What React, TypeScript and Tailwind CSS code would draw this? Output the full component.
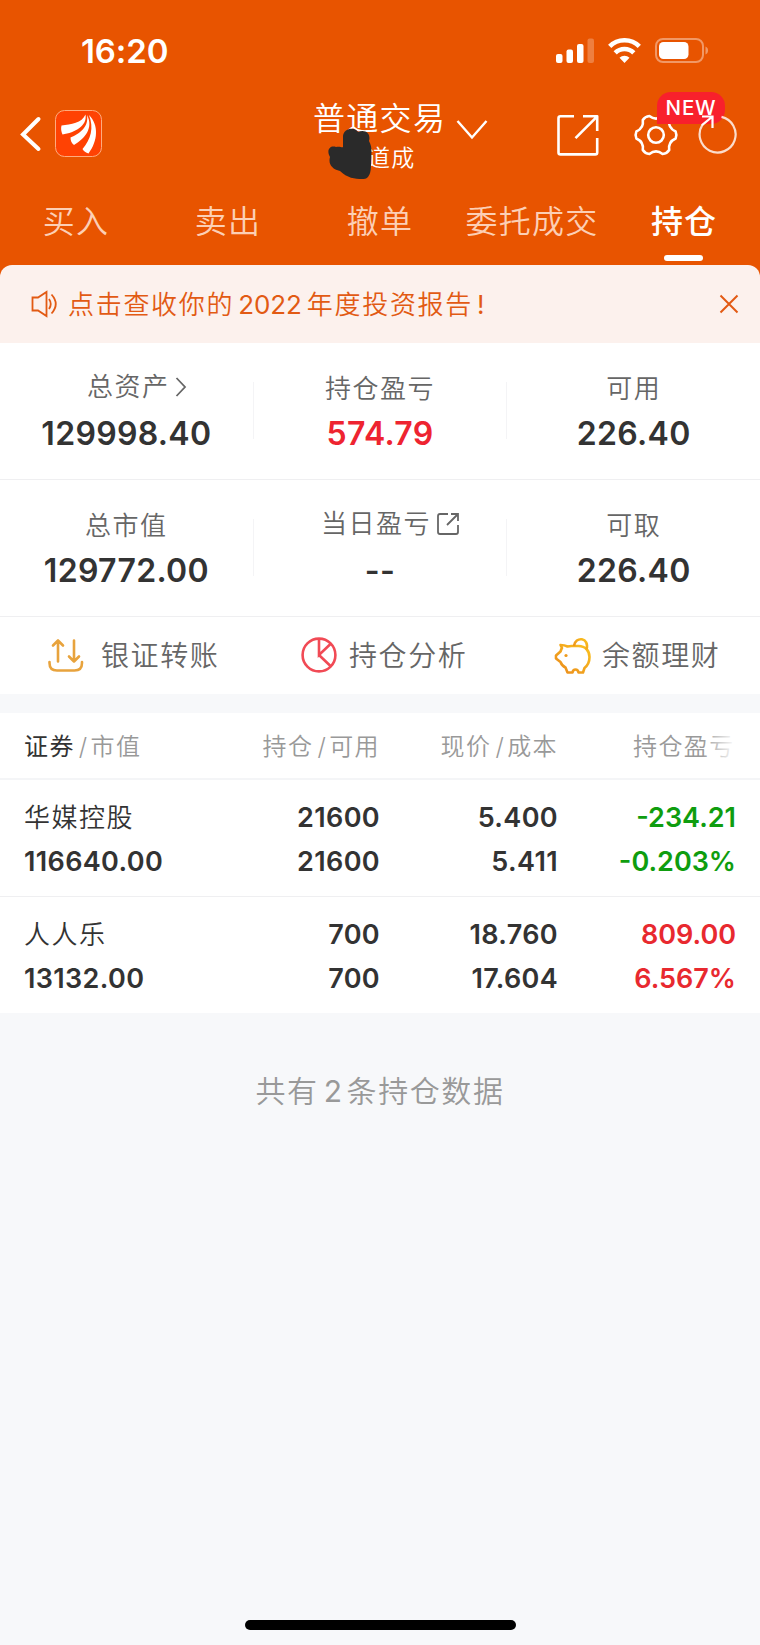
import type { ReactNode } from "react";

const tabs = ["买入", "卖出", "撤单", "委托成交", "持仓"];

const holdings = [
  {
    name: "华媒控股",
    value: "116640.00",
    amount: "21600",
    available: "21600",
    price: "5.400",
    cost: "5.411",
    profit: "-234.21",
    rate: "-0.203%",
    up: false,
  },
  {
    name: "人人乐",
    value: "13132.00",
    amount: "700",
    available: "700",
    price: "18.760",
    cost: "17.604",
    profit: "809.00",
    rate: "6.567%",
    up: true,
  },
];

function StatusBar() {
  return (
    <div className="flex h-[96px] items-start justify-between pt-[34px] pr-[51px] pl-[81px]">
      <span className="text-[33px] leading-[34px] font-semibold tracking-[-0.1px]">16:20</span>
      <div className="flex items-center pt-[4px]">
        <svg width="38" height="25" viewBox="0 0 38 25" fill="#fff">
          <rect x="0" y="16" width="6.5" height="9" rx="2" />
          <rect x="10.5" y="11.5" width="6.5" height="13.5" rx="2" />
          <rect x="21" y="6" width="6.5" height="19" rx="2" />
          <rect x="31.5" y="0.5" width="6.5" height="24.5" rx="2" opacity=".25" />
        </svg>
        <svg className="ml-[14px]" width="33" height="25" viewBox="0 0 33 25" fill="none" stroke="#fff">
          <path d="M1.7 8.4a21 21 0 0 1 29.6 0" strokeWidth="4.6" />
          <path d="M7.2 14.8a13.2 13.2 0 0 1 18.6 0" strokeWidth="4.6" />
          <path d="M16.5 25l-5-5.2a7.2 7.2 0 0 1 10 0z" fill="#fff" stroke="none" />
        </svg>
        <svg className="ml-[14px]" width="54" height="25" viewBox="0 0 54 25">
          <rect x="1" y="1" width="47" height="23" rx="7" fill="none" stroke="#fff" strokeOpacity=".4" strokeWidth="2" />
          <rect x="4" y="4" width="29.5" height="17" rx="4.5" fill="#fff" />
          <path d="M50.5 8.5c3.4 1.2 3.4 6.8 0 8z" fill="#fff" fillOpacity=".4" />
        </svg>
      </div>
    </div>
  );
}

function NavBar() {
  return (
    <div className="flex h-[89px] items-start text-white">
      <div className="flex w-[313px] pt-[14px] pl-[20px]">
        <svg className="mt-[6px]" width="22" height="36" viewBox="0 0 22 36" fill="none" stroke="#fff" strokeWidth="4">
          <path d="M18.5 3L3 18.5 18.5 33" strokeLinecap="round" />
        </svg>
        <svg className="ml-[13px]" width="47" height="47" viewBox="0 0 47 47">
          <rect x=".5" y=".5" width="46" height="46" rx="9" fill="#ff4203" stroke="#ffab7e" />
          <g fill="#fff">
            <path d="M30.5 4.5C27 13 16 14.5 6.5 15.5c-.8 3-.3 6 1 9C20 22.5 32.5 16 30.5 4.5z" />
            <path d="M32 5C34 17 25 23.5 15.5 27.5c0 3 1 5.5 3.5 7.5C29.5 29 39 18 32 5z" />
            <path d="M34 5C44 15 43 31 33.5 43.5c-2.5-1-5-2.5-6-4.5C36 29 39 18 34 5z" />
          </g>
        </svg>
      </div>
      <div className="relative pt-[5px]">
        <div className="flex items-start">
          <span className="text-[32px] leading-[36px] font-[350] tracking-[1.3px]">普通交易</span>
          <svg className="mt-[18px] ml-[10px]" width="32" height="21" viewBox="0 0 32 21" fill="none" stroke="#fff" strokeWidth="2.4">
            <path d="M1.5 2L16 18.5 30.5 2" />
          </svg>
        </div>
        <p className="mt-[4px] ml-[54px] text-[23px] leading-[28px] font-[350] tracking-[1.2px]">道成</p>
        {/* scribble over the first part of the account name */}
        <svg className="absolute top-[32px] left-[14px]" width="46" height="52" viewBox="0 0 46 52">
          <path
            d="M16 8C17-1 29-1 31 4c8-3 13 2 11 9 4 7 2 14 2 24 0 8-2 15-9 14-7 0-15-1-22-8C5 41 1 36 3 29-1 22 3 17 9 19c4-1 6 1 7 0z"
            fill="#2a2a2a"
          />
        </svg>
      </div>
      <div className="relative flex flex-1 justify-end pt-[18px] pr-[23px]">
        <svg width="44" height="44" viewBox="0 0 44 44" fill="none" stroke="#fff" strokeWidth="2.6" strokeLinejoin="round">
          <path d="M18 2.3H4.5Q2.5 2.3 2.5 4.3V38.4Q2.5 40.4 4.5 40.4H39.2Q41.2 40.4 41.2 38.4V24" />
          <path d="M27 2.3H41.2V17M41.2 2.3L19.5 24.2" />
        </svg>
        <svg className="-mt-[1.5px] ml-[33px]" width="46" height="44" viewBox="0 0 46 44" fill="none" stroke="#fff" strokeWidth="2.6">
          <path
            d="M42.6 18.5Q44.2 22 42.6 25.5Q35 29 36.2 37Q34 40.5 29.6 41Q23 35.9 16.4 41Q12 40.5 9.8 37Q11 29 3.4 25.5Q1.8 22 3.4 18.5Q11 15 9.8 7Q12 3.5 16.4 3Q23 8.1 29.6 3Q34 3.5 36.2 7Q35 15 42.6 18.5z"
            strokeLinejoin="round"
          />
          <circle cx="23" cy="22" r="7.8" />
        </svg>
        <span className="absolute top-[-4px] right-[35px] h-[32px] w-[68px] rounded-t-[14px] rounded-br-[14px] bg-[#f8202c] text-center text-[20.5px] leading-[32px] font-medium tracking-[0.8px]">
          NEW
        </span>
        <svg className="relative ml-[18px]" width="40" height="44" viewBox="0 0 40 44" fill="none" stroke="#fff" strokeWidth="2.2">
          <path d="M24.5 2.9A18 18 0 1 1 5.5 10.7" strokeOpacity=".8" />
          <path d="M5 2.5H15.5V14M15.5 2.5L5 11.2" />
        </svg>
      </div>
    </div>
  );
}

function Tabs() {
  return (
    <div className="flex h-[80px]">
      {tabs.map((tab, i) => (
        <div
          key={tab}
          className={
            i === tabs.length - 1
              ? "flex flex-1 flex-col items-center text-[32px] leading-[36px] font-medium tracking-[1px] text-white"
              : "flex flex-1 flex-col items-center text-[32px] leading-[36px] font-[350] tracking-[1.2px] text-[#fccfb5]"
          }
        >
          <span className="pt-[19px]">{tab}</span>
          {i === tabs.length - 1 && <span className="mt-[15px] mr-[1px] h-[6px] w-[39px] rounded-full bg-white" />}
        </div>
      ))}
    </div>
  );
}

function Notice() {
  return (
    <div className="bg-[#e85400]">
      <div className="flex h-[78px] items-center rounded-t-[12px] bg-[#fcf1ed] pr-[21px] pl-[31px] text-[#e25a13]">
        <svg width="27" height="28" viewBox="0 0 27 28" fill="none" stroke="currentColor" strokeWidth="1.8">
          <path d="M1.5 7.5H7L15.5 2V26L7 20.5H1.5z" />
          <path d="M18 9Q21.5 14 18 19M20.5 4.5Q29 14 20.5 23.5" />
        </svg>
        <span className="ml-[10px] text-[26px] font-[350] tracking-[1.7px]">点击查收你的</span>
        <span className="ml-[4px] text-[26px] tracking-[-0.1px]">2022</span>
        <span className="ml-[5px] text-[26px] font-[350] tracking-[1.7px]">年度投资报告</span>
        <span className="ml-[4px] flex-1 text-[26px]">!</span>
        <svg width="20" height="20" viewBox="0 0 20 20" fill="none" stroke="currentColor" strokeWidth="2">
          <path d="M1.5 1.5l17 17M18.5 1.5l-17 17" />
        </svg>
      </div>
    </div>
  );
}

interface StatProps {
  label: string;
  value: string;
  icon?: ReactNode;
  red?: boolean;
}

function Stat({ label, value, icon, red }: StatProps) {
  return (
    <div className="flex flex-1 flex-col items-center">
      <div className={icon ? "mt-[26px] flex h-[36px] items-center pl-[21px]" : "mt-[29px] flex h-[33px] items-center"}>
        <span className="text-[26px] leading-[34px] font-[350] tracking-[1.5px] text-[#666]">{label}</span>
        {icon}
      </div>
      <span
        className={
          red
            ? "mt-[11px] text-[32px] leading-[36px] font-semibold tracking-[0.3px] text-[#ee2430]"
            : "mt-[11px] text-[32px] leading-[36px] font-semibold tracking-[0.3px] text-[#333]"
        }
      >
        {value}
      </span>
    </div>
  );
}

function Divider() {
  return <div className="mt-[39px] h-[57px] w-px bg-[#f4f4f6]" />;
}

function Summary() {
  return (
    <div className="bg-white">
      <div className="flex h-[137px] border-b border-[#efeff1]">
        <Stat
          label="总资产"
          value="129998.40"
          icon={
            <svg className="ml-[5px]" width="12" height="20" viewBox="0 0 12 20" fill="none" stroke="#666" strokeWidth="1.8">
              <path d="M1.5 1L10 10 1.5 19" />
            </svg>
          }
        />
        <Divider />
        <Stat label="持仓盈亏" value="574.79" red />
        <Divider />
        <Stat label="可用" value="226.40" />
      </div>
      <div className="flex h-[137px] border-b border-[#efeff1]">
        <Stat label="总市值" value="129772.00" />
        <Divider />
        <Stat
          label="当日盈亏"
          value="--"
          icon={
            <svg className="ml-[5px]" width="24" height="24" viewBox="0 0 24 24" fill="none" stroke="#666" strokeWidth="1.8">
              <path d="M12 2H4Q2 2 2 4V20Q2 22 4 22H20Q22 22 22 20V13" />
              <path d="M15 2H22V9M22 2L11 13" />
            </svg>
          }
        />
        <Divider />
        <Stat label="可取" value="226.40" />
      </div>
    </div>
  );
}

function Actions() {
  return (
    <div className="flex h-[77px] items-center bg-white text-[28px] font-[350] tracking-[1.6px] text-[#666]">
      <div className="flex w-[253px] items-center pl-[47px]">
        <svg width="37" height="36" viewBox="0 0 37 36" fill="none" stroke="#e8a33d" strokeWidth="2.6" strokeLinecap="round" strokeLinejoin="round">
          <path d="M11 23.500V2.500M6 7.500l5-5 5 5M27 2.500v21M22 18.500l5 5 5-5" />
          <path d="M2.500 24v1q0 7.500 7.500 7.500h17.500q7.500 0 7.500-7.500v-1" />
        </svg>
        <span className="ml-[17px]">银证转账</span>
      </div>
      <div className="flex w-[253px] items-center pl-[48px]">
        <svg width="37" height="37" viewBox="0 0 37 37" fill="none" stroke="#f14a55" strokeWidth="2.6">
          <circle cx="18" cy="18" r="16.4" />
          <path d="M18 2v16L30 6.5M18 18L30 29.5" />
        </svg>
        <span className="ml-[11px]">持仓分析</span>
      </div>
      <div className="flex flex-1 items-center pl-[48px]">
        <svg width="37" height="37" viewBox="0 0 37 37" fill="none" stroke="url(#pig)" strokeWidth="2.6" strokeLinejoin="round">
          <defs>
            <linearGradient id="pig" x1="0" y1="1" x2="1" y2="0">
              <stop stopColor="#ea8a1c" />
              <stop offset="1" stopColor="#fbc21f" />
            </linearGradient>
          </defs>
          <path d="M6.5 8q4 0 7 1.500 2-.5 4-.5h7c7 0 11 5 11 11 0 5-2.500 9-5 11l-1.500 4.500h-4.500q-.5-3-3-3t-3 3h-5l-2-5q-3.500-1.500-5-5.500l-4.500-3.500v-3l4.500-4q1-3 1.500-3.500z" />
          <path d="M20 9c1-10 16-9 12.500 3.500" />
          <circle cx="12" cy="18.5" r="1.6" fill="#ee9a1c" stroke="none" />
        </svg>
        <span className="ml-[11px]">余额理财</span>
      </div>
    </div>
  );
}

function Slash() {
  return <span className="pr-[2px] pl-[4px]">/</span>;
}

function Holdings() {
  return (
    <div className="bg-white">
      <div className="flex h-[67px] items-center border-b-2 border-[#f4f5f7] px-[24px] pt-[3px] text-[24px] font-[350] tracking-[1.4px] text-[#999]">
        <div className="w-[190px]">
          <span className="font-normal text-[#333]">证券</span>
          <Slash />
          市值
        </div>
        <div className="w-[166px] text-right">
          持仓
          <Slash />
          可用
        </div>
        <div className="w-[178px] text-right">
          现价
          <Slash />
          成本
        </div>
        <div className="relative ml-[75px] w-[103px] overflow-hidden whitespace-nowrap">
          持仓盈亏
          <span className="absolute inset-y-0 right-0 w-[34px] bg-linear-to-r from-transparent to-white" />
        </div>
      </div>
      {holdings.map((item) => (
        <div
          key={item.name}
          className="flex h-[117px] border-b border-[#efeff1] px-[24px] pt-[16px] text-[27px] leading-[44px] font-semibold tracking-[0.35px] text-[#333] last:h-[116px] last:border-b-0"
        >
          <div className="w-[190px]">
            <p className="text-[26px] font-[350] tracking-[1.5px]">{item.name}</p>
            <p>{item.value}</p>
          </div>
          <div className="w-[166px] text-right">
            <p>{item.amount}</p>
            <p>{item.available}</p>
          </div>
          <div className="w-[178px] text-right">
            <p>{item.price}</p>
            <p>{item.cost}</p>
          </div>
          <div
            className={
              item.up
                ? "w-[178px] text-right tracking-normal text-[#e8292f]"
                : "w-[178px] text-right tracking-normal text-[#0f9d0f]"
            }
          >
            <p>{item.profit}</p>
            <p>{item.rate}</p>
          </div>
        </div>
      ))}
    </div>
  );
}

export default function App() {
  return (
    <div className="flex h-[1645px] w-[760px] flex-col overflow-hidden bg-[#f7f8fa] font-[Inter,'Noto_Sans_CJK_SC',sans-serif]">
      <header className="bg-[#e85400] text-white">
        <StatusBar />
        <NavBar />
        <Tabs />
      </header>
      <Notice />
      <Summary />
      <Actions />
      <div className="h-[19px] shrink-0" />
      <Holdings />
      <p className="mt-[60px] flex items-center justify-center text-[30px] leading-[36px] font-[350] tracking-[1.6px] text-[#999]">
        共有<span className="pr-[3px] pl-[5px] font-normal">2</span>条持仓数据
      </p>
      <div className="mx-auto mt-auto mb-[15px] h-[10px] w-[271px] rounded-full bg-black" />
    </div>
  );
}
